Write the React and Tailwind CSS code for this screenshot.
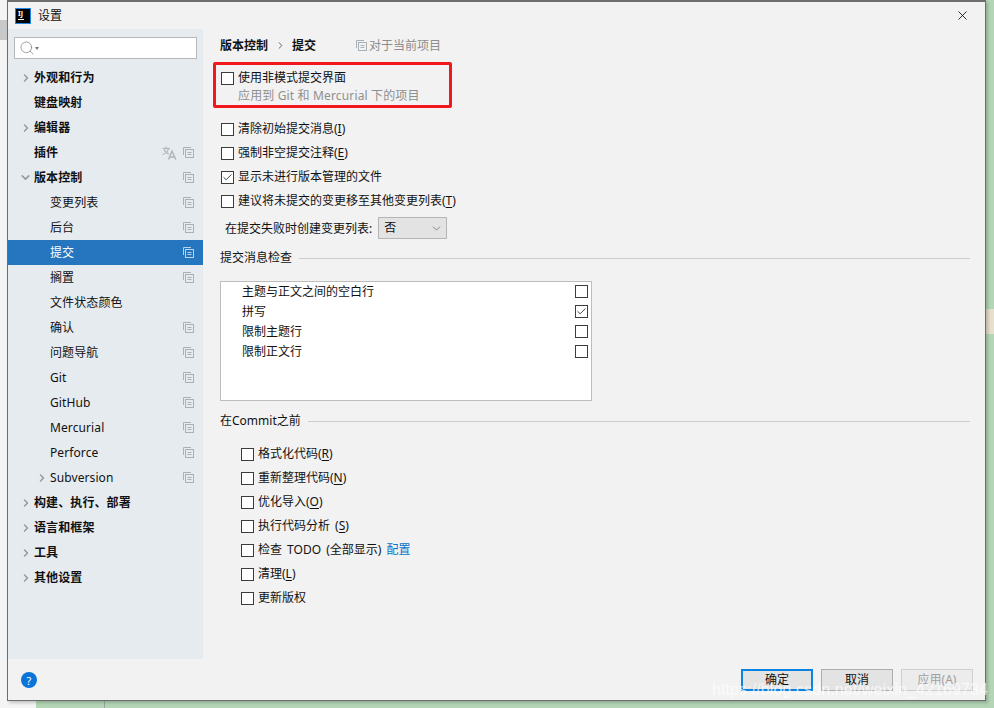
import React from "react";
import { ChevronRight, ChevronDown, Check, X, Search } from "lucide-react";

const FONT = "font-['Noto_Sans','Noto_Sans_CJK_SC',sans-serif]";

const navItems = [
  { label: "外观和行为", bold: true, arrow: "right" },
  { label: "键盘映射", bold: true },
  { label: "编辑器", bold: true, arrow: "right" },
  { label: "插件", bold: true, copy: true, translate: true },
  { label: "版本控制", bold: true, arrow: "down", copy: true },
  { label: "变更列表", copy: true },
  { label: "后台", copy: true },
  { label: "提交", copy: true, selected: true },
  { label: "搁置", copy: true },
  { label: "文件状态颜色" },
  { label: "确认", copy: true },
  { label: "问题导航", copy: true },
  { label: "Git", copy: true },
  { label: "GitHub", copy: true },
  { label: "Mercurial", copy: true },
  { label: "Perforce", copy: true },
  { label: "Subversion", copy: true, arrow: "right" },
  { label: "构建、执行、部署", bold: true, arrow: "right" },
  { label: "语言和框架", bold: true, arrow: "right" },
  { label: "工具", bold: true, arrow: "right" },
  { label: "其他设置", bold: true, arrow: "right" },
];

const CopyIcon = ({ color = "#a9b1b8" }) => (
  <svg width="11" height="11" viewBox="0 0 11 11" fill="none" stroke={color}>
    <path d="M0.5 8V0.5H8" />
    <rect x="2.5" y="2.5" width="8" height="8" />
    <path d="M4.5 5.5H8.5M4.5 7.5H8.5" />
  </svg>
);

const TranslateIcon = () => (
  <svg width="15" height="14" viewBox="0 0 15 14" fill="none" stroke="#aeb4ba" strokeWidth="1.1">
    <path d="M0.5 2.5H8M4 0.5V2.5M6.5 2.5C6 5 3.5 7.5 0.5 8.5M2 3.5C3 5.5 5 7.5 7 8" />
    <path d="M6.5 13.5L10 5L13.8 13.5M7.8 11H12.6" strokeWidth="1.4" />
  </svg>
);

const NavRow = ({ item }) => {
  const nested = !item.bold;
  return (
    <div className={`flex h-[25px] items-center pr-[9px] ${item.selected ? "bg-[#2675bf] text-white" : "text-[#111]"}`}>
      <div className={`flex w-[26px] shrink-0 justify-end ${nested ? "ml-[16px]" : ""}`}>
        {item.arrow === "right" && <ChevronRight size={12} strokeWidth={3} className="mr-[2px] text-[#999]" />}
        {item.arrow === "down" && <ChevronDown size={13} strokeWidth={3} className="mr-[2px] text-[#999]" />}
      </div>
      <span className={`flex-1 text-[12px] tracking-[0.1px] ${item.bold ? "font-bold" : ""}`}>{item.label}</span>
      {item.translate && <span className="mr-[6px] flex"><TranslateIcon /></span>}
      {item.copy && <CopyIcon color={item.selected ? "#b9d3ea" : "#a9b1b8"} />}
    </div>
  );
};

const Box = ({ checked, className = "" }) => (
  <span className={`flex h-[13px] w-[13px] shrink-0 items-center justify-center border border-[#3c3c3c] bg-white ${className}`}>
    {checked && <Check size={11} strokeWidth={2} className="text-[#333]" />}
  </span>
);

const Mn = ({ children }) => <span className="underline underline-offset-2">{children}</span>;

const CheckRow = ({ checked, children }) => (
  <div className="flex h-[24px] items-center gap-[4px] text-[12px] text-[#111] [word-spacing:2px]">
    <Box checked={checked} />
    <span>{children}</span>
  </div>
);

const SectionTitle = ({ children }) => (
  <div className="flex h-[20px] items-center gap-[7px] text-[12px] text-[#111]">
    <span>{children}</span>
    <div className="h-px flex-1 bg-[#cdcdcd]" />
  </div>
);

const Btn = ({ children, primary, disabled }) => (
  <button
    className={`h-[22px] w-[72px] bg-[#e3e3e3] text-[12px] leading-none ${
      primary
        ? "border-2 border-[#0a84e0] text-[#111]"
        : disabled
          ? "border border-[#cfcfcf] bg-[#ececec] text-[#9f9f9f]"
          : "border border-[#adadad] text-[#111]"
    }`}
  >
    {children}
  </button>
);

const checks = [
  { label: "主题与正文之间的空白行" },
  { label: "拼写", checked: true },
  { label: "限制主题行" },
  { label: "限制正文行" },
];

export default function App() {
  return (
    <div className={`relative h-[708px] w-[994px] overflow-hidden bg-[#b4d6b6] ${FONT}`}>
      {/* whatever is behind the dialog */}
      <div className="absolute left-0 top-0 h-full w-[36px] bg-[#f4f4f4]" />
      <div className="absolute left-0 top-[20px] h-[20px] w-[8px] bg-[#c8c8c8]" />
      <div className="absolute right-0 top-[309px] h-[25px] w-[8px] bg-[#e6e0cc]" />
      <div className="absolute left-[104px] top-[700px] h-[8px] w-px bg-[#9aa89a]" />

      <div className="absolute left-[7px] top-0 flex h-[701px] w-[979px] flex-col border border-t-2 border-[#6e6e6e] bg-[#f2f2f2] shadow-[2px_2px_3px_rgba(0,0,0,0.2)]">
        <div className="flex h-[27px] shrink-0 items-center">
          <div className="ml-[7px] flex h-[16px] w-[16px] flex-col border border-[#1f86e8] bg-black px-[2px] pt-[1px]">
            <span className="text-[7px] font-bold leading-[8px] text-white">IJ</span>
            <span className="mt-px h-px w-[6px] bg-white" />
          </div>
          <span className="ml-[7px] text-[12px] text-[#111]">设置</span>
          <X size={15} strokeWidth={1.3} className="ml-auto mr-[15px] text-black" />
        </div>

        <div className="flex min-h-0 flex-1">
          <aside className="flex w-[195px] shrink-0 flex-col bg-[#e6ebf0]">
            <div className="mx-[6px] mt-[8px] flex h-[22px] items-center border border-[#b8b8b8] bg-white pl-[4px] text-[#8a8a8a]">
              <Search size={16} strokeWidth={1.2} />
              <span className="h-0 w-0 border-x-[2px] border-t-[3px] border-x-transparent border-t-[#777]" />
            </div>
            <nav className="mt-[6px]">
              {navItems.map((item) => (
                <NavRow key={item.label} item={item} />
              ))}
            </nav>
          </aside>

          <main className="flex min-w-0 flex-1 flex-col pl-[17px] pr-[15px]">
            <div className="flex h-[32px] items-center pt-[1px] text-[12px]">
              <span className="font-bold text-[#111]">版本控制</span>
              <ChevronRight size={11} strokeWidth={1.6} className="ml-[7px] mr-[6px] text-[#333]" />
              <span className="font-bold text-[#111]">提交</span>
              <span className="ml-[40px] flex items-center gap-[2px] text-[#8d8d8d]">
                <CopyIcon />
                对于当前项目
              </span>
            </div>

            <div className="-ml-[7px] mt-[1px] w-[239px] rounded-[2px] border-[3px] border-[#f0181c] pl-[5px] pt-[1px]">
              <CheckRow>使用非模式提交界面</CheckRow>
              <div className="-mt-[4px] pl-[17px] text-[12px] leading-[19px] tracking-[0.15px] text-[#8f8f8f]">应用到 Git 和 Mercurial 下的项目</div>
            </div>

            <div className="ml-px mt-[9px]">
              <CheckRow>清除初始提交消息(<Mn>I</Mn>)</CheckRow>
              <CheckRow>强制非空提交注释(<Mn>E</Mn>)</CheckRow>
              <CheckRow checked>显示未进行版本管理的文件</CheckRow>
              <CheckRow>建议将未提交的变更移至其他变更列表(<Mn>T</Mn>)</CheckRow>
            </div>

            <div className="mt-[4px] flex items-center pl-[5px] text-[12px] text-[#111]">
              <span className="pt-[1px]">在提交失败时创建变更列表:</span>
              <div className="ml-[6px] flex h-[22px] w-[69px] items-center justify-between border border-[#b5b5b5] bg-[#e3e3e3] pl-[5px] pr-[3px]">
                <span>否</span>
                <ChevronDown size={13} strokeWidth={1.2} className="text-[#555]" />
              </div>
            </div>

            <div className="mt-[9px]">
              <SectionTitle>提交消息检查</SectionTitle>
            </div>

            <div className="mt-[13px] h-[120px] w-[372px] border border-[#bdbdbd] bg-white">
              {checks.map((c) => (
                <div key={c.label} className="flex h-[20px] items-center justify-between pl-[21px] pr-[3px] text-[12px] text-[#111]">
                  <span>{c.label}</span>
                  <Box checked={c.checked} className="mb-px" />
                </div>
              ))}
            </div>

            <div className="mt-[10px]">
              <SectionTitle>在Commit之前</SectionTitle>
            </div>

            <div className="mt-[11px] pl-[21px]">
              <CheckRow>格式化代码(<Mn>R</Mn>)</CheckRow>
              <CheckRow>重新整理代码(<Mn>N</Mn>)</CheckRow>
              <CheckRow>优化导入(<Mn>O</Mn>)</CheckRow>
              <CheckRow>执行代码分析 (<Mn>S</Mn>)</CheckRow>
              <CheckRow>
                检查 TODO (全部显示) <span className="text-[#0a74c9]">配置</span>
              </CheckRow>
              <CheckRow>清理(<Mn>L</Mn>)</CheckRow>
              <CheckRow>更新版权</CheckRow>
            </div>
          </main>
        </div>

        <footer className="flex h-[41px] shrink-0 items-center pl-[13px] pr-[12px] pt-px">
          <span className="flex h-[16px] w-[16px] items-center justify-center rounded-full bg-[#0a74d8] text-[11px] leading-none text-white">?</span>
          <div className="ml-auto flex gap-[8px]">
            <Btn primary>确定</Btn>
            <Btn>取消</Btn>
            <Btn disabled>应用(A)</Btn>
          </div>
        </footer>
      </div>

      {/* csdn watermark */}
      <span className="pointer-events-none absolute left-[712px] top-[679px] whitespace-nowrap font-['Liberation_Sans',sans-serif] text-[16px] leading-[22px] tracking-[0.1px] text-white/70">
        https://blog.csdn.net/weixin_42169734
      </span>
    </div>
  );
}
